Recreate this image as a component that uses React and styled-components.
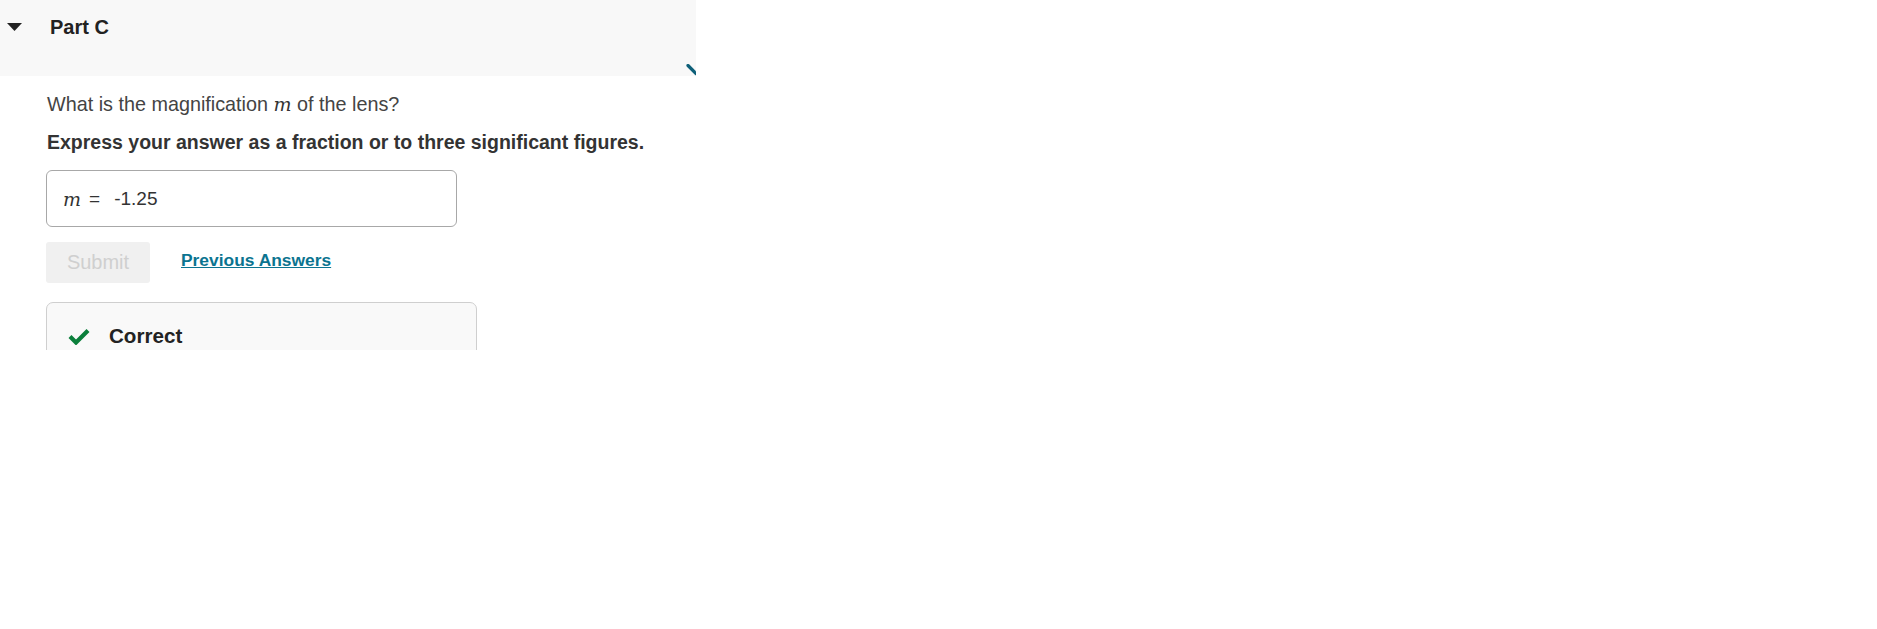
import React from 'react';
import styled, { createGlobalStyle } from 'styled-components';

const GlobalStyle = createGlobalStyle`
  body {
    margin: 0;
    background: #ffffff;
    font-family: "Liberation Sans", Arial, sans-serif;
  }
`;

const S = {};

S.Part = styled.section`
  width: 696px;
  height: 350px;
  overflow: hidden;
`;

S.Header = styled.header`
  position: relative;
  height: 76px;
  box-sizing: border-box;
  padding: 15px 0 0 7px;
  background: #f8f8f8;
  display: flex;
  align-items: flex-start;
  gap: 28px;
`;

S.Caret = styled.svg`
  margin-top: 8px;
  flex: none;
`;

S.Title = styled.h2`
  margin: 0;
  font-size: 20px;
  line-height: 24px;
  font-weight: 700;
  color: #222;
`;

S.Marker = styled.svg`
  position: absolute;
  right: -2px;
  bottom: 0;
`;

S.Body = styled.div`
  padding: 14px 0 0 46px;
  display: flex;
  flex-direction: column;
  align-items: flex-start;
`;

S.Question = styled.p`
  margin: 0 0 0 1px;
  font-size: 19.8px;
  line-height: 28px;
  color: #444;
`;

S.Instruction = styled.p`
  margin: 10px 0 0 1px;
  font-size: 19.5px;
  line-height: 28px;
  font-weight: 700;
  color: #333;
`;

S.Var = styled.span`
  font-family: "DejaVu Serif", "Liberation Serif", serif;
  font-style: italic;
  font-size: ${p => p.size || 19}px;
  color: #333;
`;

S.AnswerBox = styled.div`
  margin-top: 14px;
  width: 411px;
  height: 57px;
  box-sizing: border-box;
  border: 1px solid #a8a8a8;
  border-radius: 6px;
  padding-left: 16px;
  display: flex;
  align-items: center;
  font-size: 19px;
  color: #333;
`;

S.Equals = styled.span`
  margin-left: 8px;
`;

S.Value = styled.span`
  margin-left: 14px;
`;

S.Actions = styled.div`
  margin-top: 15px;
  display: flex;
  align-items: center;
  gap: 31px;
`;

S.Submit = styled.button`
  width: 104px;
  height: 41px;
  border: none;
  border-radius: 3px;
  background: #f0f0f0;
  color: #cfcfcf;
  font-family: inherit;
  font-size: 20px;
  padding: 0;
`;

S.Link = styled.a`
  font-size: 17.4px;
  font-weight: 700;
  color: #0b7490;
  text-decoration: underline;
  padding-bottom: 4px;
`;

S.Feedback = styled.div`
  margin-top: 19px;
  width: 431px;
  height: 80px;
  box-sizing: border-box;
  border: 1px solid #cfcfcf;
  border-radius: 7px;
  background: #f9f9f9;
  padding: 19px 0 0 21px;
  display: flex;
  align-items: flex-start;
  gap: 19px;
`;

S.Check = styled.svg`
  margin-top: 6px;
  flex: none;
`;

S.FeedbackTitle = styled.span`
  font-size: 20.6px;
  line-height: 28px;
  font-weight: 700;
  color: #222;
`;

const App = () => {
  return (
    <>
      <GlobalStyle />
      <S.Part>
        <S.Header>
          <S.Caret width="15" height="8" viewBox="0 0 15 8">
            <path d="M0 0 H15 L7.5 8 Z" fill="#222" />
          </S.Caret>
          <S.Title>Part C</S.Title>
          <S.Marker width="12" height="12" viewBox="0 0 12 12">
            <path d="M2 1.5 L10 9.5" stroke="#0d5f78" strokeWidth="3.2" strokeLinecap="round" />
          </S.Marker>
        </S.Header>
        <S.Body>
          <S.Question>
            What is the magnification <S.Var>m</S.Var> of the lens?
          </S.Question>
          <S.Instruction>Express your answer as a fraction or to three significant figures.</S.Instruction>
          <S.AnswerBox>
            <S.Var size={19}>m</S.Var>
            <S.Equals>=</S.Equals>
            <S.Value>-1.25</S.Value>
          </S.AnswerBox>
          <S.Actions>
            <S.Submit disabled>Submit</S.Submit>
            <S.Link href="#">Previous Answers</S.Link>
          </S.Actions>
          <S.Feedback>
            <S.Check width="22" height="17" viewBox="0 0 22 17">
              <path d="M2 8.5 L8 14.5 L20 2.5" fill="none" stroke="#0b7f3b" strokeWidth="4.2" />
            </S.Check>
            <S.FeedbackTitle>Correct</S.FeedbackTitle>
          </S.Feedback>
        </S.Body>
      </S.Part>
    </>
  );
};

export default App;
